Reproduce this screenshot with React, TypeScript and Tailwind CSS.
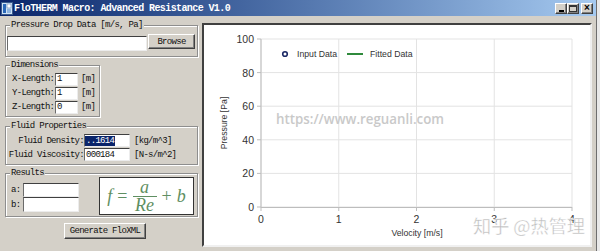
import type { ReactNode } from "react";

const raised =
  "bg-[#d4d0c8] border border-t-white border-l-white border-b-[#404040] border-r-[#404040] shadow-[inset_-1px_-1px_0_#808080]";
const sunken = "bg-white border border-t-[#404040] border-l-[#6b6b6b] border-b-[#ececec] border-r-[#ececec]";
const etched = "border border-[#8e8e8e] shadow-[inset_1px_1px_0_#fff,1px_1px_0_#fff]";

function Group({ label, className, children }: { label: string; className: string; children?: ReactNode }) {
  return (
    <div className={`flex flex-col ${etched} ${className}`}>
      <span className="-mt-[6px] ml-[4px] w-fit bg-[#d4d0c8] px-[1px] leading-[10px]">{label}</span>
      {children}
    </div>
  );
}

function LengthRow({ label, value }: { label: string; value: string }) {
  return (
    <div className="flex h-[14px] items-center">
      <span className="w-[49px] pl-[6px]">{label}</span>
      <div className={`flex h-[13px] w-[23px] items-center pl-[1px] ${sunken}`}>{value}</div>
      <span className="ml-[3px]">[m]</span>
    </div>
  );
}

const gridY = [0, 1, 2, 3, 4, 5].map((i) => 39 + i * 33.6);
const gridX = [0, 1, 2, 3, 4].map((i) => 261 + i * 77.75);

function Chart() {
  return (
    <svg width={386} height={220} viewBox="204 25 386 220" className="block">
      {gridY.map((y) => (
        <line key={y} x1={261} x2={572} y1={y} y2={y} stroke="#e3e3e3" />
      ))}
      {gridX.map((x) => (
        <line key={x} x1={x} x2={x} y1={39} y2={207} stroke="#e3e3e3" />
      ))}
      <line x1={261} x2={261} y1={39} y2={207.5} stroke="#bdbdbd" />
      <line x1={261} x2={572} y1={207.5} y2={207.5} stroke="#bdbdbd" />
      {gridY.map((y) => (
        <line key={"t" + y} x1={257} x2={261} y1={y} y2={y} stroke="#bdbdbd" />
      ))}
      {gridX.map((x) => (
        <line key={"u" + x} x1={x} x2={x} y1={207} y2={211} stroke="#bdbdbd" />
      ))}
      <g fontFamily="Liberation Sans, Arial, sans-serif" fontSize={10.5} fill="#333">
        {["100", "80", "60", "40", "20", "0"].map((t, i) => (
          <text key={t} x={254} y={gridY[i] + 4} textAnchor="end">
            {t}
          </text>
        ))}
        {["0", "1", "2", "3", "4"].map((t, i) => (
          <text key={"x" + t} x={gridX[i]} y={223} textAnchor="middle">
            {t}
          </text>
        ))}
      </g>
      <g fontFamily="Liberation Sans, Arial, sans-serif" fontSize={8.7} fill="#333">
        <text x={417} y={236} textAnchor="middle">
          Velocity [m/s]
        </text>
        <text transform="translate(227 123) rotate(-90)" textAnchor="middle">
          Pressure [Pa]
        </text>
        <circle cx={285} cy={54} r={2.3} fill="#fff" stroke="#1c2a66" strokeWidth={1.6} />
        <text x={297} y={57}>
          Input Data
        </text>
        <line x1={347} x2={363} y1={54} y2={54} stroke="#2f8a3c" strokeWidth={2} />
        <text x={370} y={57}>
          Fitted Data
        </text>
      </g>
      <text
        x={276}
        y={124}
        fontFamily="Open Sans, sans-serif"
        fontWeight={600}
        fontSize={13.5}
        fill="#c9c9c9"
        textLength={168}
        lengthAdjust="spacingAndGlyphs"
      >
        https://www.reguanli.com
      </text>
      <text
        x={473}
        y={233}
        fontFamily="Noto Sans CJK SC, sans-serif"
        fontSize={18}
        fill="#bcbcbc"
        stroke="#fff"
        strokeWidth={0.4}
        textLength={112}
        lengthAdjust="spacingAndGlyphs"
      >
        知乎 @热管理
      </text>
    </svg>
  );
}

function TitleIcon() {
  return (
    <svg width={12} height={13} viewBox="0 0 12 13" className="block">
      <rect x={0.5} y={0.5} width={11} height={12} fill="#cfe2f5" stroke="#3a5b8c" />
      <rect x={2} y={2} width={3} height={9} fill="#2a68b8" />
      <rect x={6} y={2} width={4} height={4} fill="#ffffff" stroke="#5a7aa8" strokeWidth={0.6} />
      <rect x={6} y={7} width={4} height={4} fill="#8fb4de" />
    </svg>
  );
}

function WinButton({ children, className = "" }: { children: ReactNode; className?: string }) {
  return (
    <div className={`flex h-[11px] w-[12px] items-center justify-center ${raised} ${className}`}>{children}</div>
  );
}

export default function App() {
  return (
    <div className="h-[251px] w-[600px] overflow-hidden bg-[#e9e9e9]">
      <div className="flex h-[251px] w-[597px] flex-col border-r border-[#6e6e6e] bg-[#d4d0c8]">
        <div className="flex h-[16px] shrink-0 items-center bg-linear-to-r from-[#0a246a] to-[#a6caf0] pl-[1px] pr-[3px]">
          <TitleIcon />
          <span className="ml-[1px] font-['Liberation_Mono',monospace] text-[10px] font-bold tracking-[-0.6px] text-white">
            FloTHERM Macro: Advanced Resistance V1.0
          </span>
          <div className="ml-auto flex items-center">
            <WinButton>
              <div className="mt-[5px] h-[2px] w-[5px] bg-black" />
            </WinButton>
            <WinButton>
              <div className="h-[7px] w-[8px] border border-t-2 border-[#333]" />
            </WinButton>
            <WinButton className="ml-[2px]">
              <span className="font-['Liberation_Sans',sans-serif] text-[10px] leading-none font-bold text-black">
                ×
              </span>
            </WinButton>
          </div>
        </div>

        <div className="flex">
          <div className="ml-[5px] flex w-[193px] flex-col font-['Liberation_Mono',monospace] text-[9px] leading-[10px] tracking-[-0.7px] text-[#111]">
            <Group label="Pressure Drop Data [m/s, Pa]" className="mt-[9px] h-[32px] w-[193px]">
              <div className="mt-[4px] flex items-start">
                <div className={`ml-[1px] mt-[2px] h-[15px] w-[140px] ${sunken}`} />
                <button className={`ml-[1px] h-[15px] w-[47px] ${raised} leading-[10px]`}>Browse</button>
              </div>
            </Group>

            <Group label="Dimensions" className="mt-[8px] h-[52px] w-[95px]">
              <div className="mt-[2px] flex flex-col">
                <LengthRow label="X-Length:" value="1" />
                <LengthRow label="Y-Length:" value="1" />
                <LengthRow label="Z-Length:" value="0" />
              </div>
            </Group>

            <Group label="Fluid Properties" className="mt-[9px] h-[39px] w-[193px]">
              <div className="mt-[3px] flex flex-col gap-[1px]">
                <div className="flex h-[13px] items-center">
                  <span className="w-[78px] text-right">Fluid Density:</span>
                  <div className={`flex h-[13px] w-[46px] items-center ${sunken}`}>
                    <span className="bg-[#0a246a] px-[1px] text-white">..1614</span>
                  </div>
                  <span className="ml-[4px]">[kg/m^3]</span>
                </div>
                <div className="flex h-[13px] items-center">
                  <span className="w-[78px] text-right">Fluid Viscosity:</span>
                  <div className={`flex h-[13px] w-[46px] items-center pl-[1px] ${sunken}`}>000184</div>
                  <span className="ml-[4px]">[N-s/m^2]</span>
                </div>
              </div>
            </Group>

            <Group label="Results" className="mt-[8px] h-[44px] w-[193px]">
              <div className="-mt-[1px] flex items-start">
                <div className="mt-[6px] flex flex-col">
                  <div className="flex h-[14px] items-center">
                    <span className="w-[17px] pl-[5px]">a:</span>
                    <div className={`h-[14px] w-[56px] ${sunken}`} />
                  </div>
                  <div className="flex h-[15px] items-center">
                    <span className="w-[17px] pl-[5px]">b:</span>
                    <div className={`h-[15px] w-[56px] ${sunken}`} />
                  </div>
                </div>
                <div className="ml-[20px] flex h-[38px] w-[95px] items-center justify-center gap-[5px] border border-[#333] bg-white font-['Liberation_Serif',serif] text-[18px] leading-[16px] italic tracking-normal text-[#5f8f62]">
                  <span>f</span>
                  <span className="not-italic">=</span>
                  <span className="flex flex-col items-center">
                    <span className="leading-[15px]">a</span>
                    <span className="my-[1px] h-[1px] w-[24px] bg-[#5f8f62]" />
                    <span className="leading-[15px]">Re</span>
                  </span>
                  <span className="not-italic">+</span>
                  <span>b</span>
                </div>
              </div>
            </Group>

            <button className={`ml-[59px] mt-[6px] h-[16px] w-[82px] ${raised} leading-[10px]`}>Generate FloXML</button>
          </div>

          <div className="ml-[4px] mt-[7px] h-[224px] w-[390px] border-2 border-t-[#404040] border-l-[#404040] border-b-[#f0f0f0] border-r-[#f0f0f0] bg-white">
            <Chart />
          </div>
        </div>
      </div>
    </div>
  );
}
